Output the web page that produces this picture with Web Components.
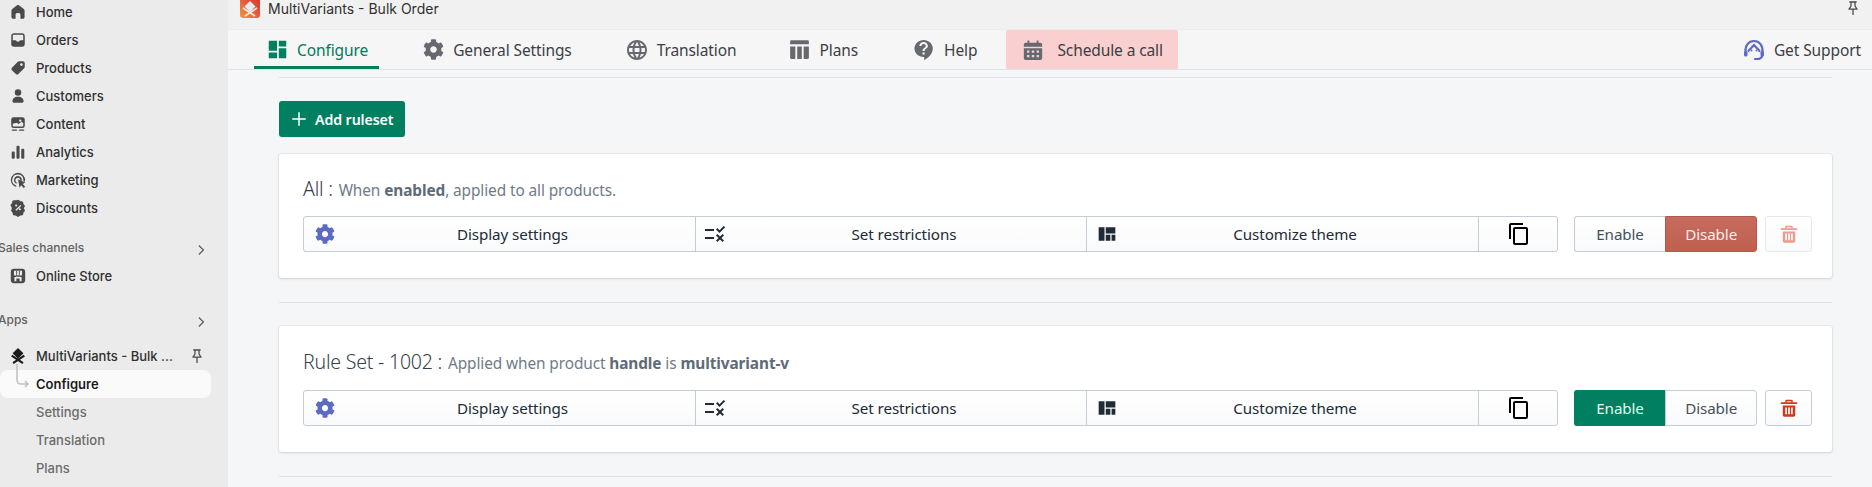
<!DOCTYPE html>
<html lang="en">
<head>
<meta charset="utf-8">
<title>MultiVariants - Bulk Order</title>
<style>
  html, body { margin: 0; height: 487px; overflow: hidden; background: #f4f6f8; }
  body { display: flex; font-family: "Noto Sans", sans-serif; }
  app-main { flex: 1; min-width: 0; }
</style>
</head>
<body>

<app-sidebar>
  <side-item icon="home">Home</side-item>
  <side-item icon="orders">Orders</side-item>
  <side-item icon="products">Products</side-item>
  <side-item icon="customers">Customers</side-item>
  <side-item icon="content">Content</side-item>
  <side-item icon="analytics">Analytics</side-item>
  <side-item icon="marketing">Marketing</side-item>
  <side-item icon="discounts">Discounts</side-item>
  <side-heading style="margin-top:12px">Sales channels</side-heading>
  <side-item icon="store">Online Store</side-item>
  <side-heading style="margin-top:16px">Apps</side-heading>
  <side-item icon="applogo" style="margin-top:8px" pinned>MultiVariants - Bulk ...</side-item>
  <side-item sub active connector>Configure</side-item>
  <side-item sub>Settings</side-item>
  <side-item sub>Translation</side-item>
  <side-item sub>Plans</side-item>
</app-sidebar>

<app-main>
  <title-bar>MultiVariants - Bulk Order</title-bar>
  <tab-bar>
    <tab-item icon="dashboard" active>Configure</tab-item>
    <tab-item icon="cog" style="margin-left:31px">General Settings</tab-item>
    <tab-item icon="globe" style="margin-left:31px">Translation</tab-item>
    <tab-item icon="table" style="margin-left:29px">Plans</tab-item>
    <tab-item icon="help" style="margin-left:32px">Help</tab-item>
    <tab-item icon="calendar" highlight style="margin-left:18px">Schedule a call</tab-item>
    <tab-item icon="support" slot="end">Get Support</tab-item>
  </tab-bar>
  <rule-list>
    <add-button>Add ruleset</add-button>
    <rule-card heading="All :" state="disabled">When <b>enabled</b>, applied to all products.</rule-card>
    <rule-card heading="Rule Set - 1002 :" state="enabled" style="--card-h:126px;--head-top:25px;--head-h:39px">Applied when product <b>handle</b> is <b>multivariant-v</b></rule-card>
  </rule-list>
</app-main>

<script>
const ICONS = {
  home: '<path d="M10 2.200c-.5 0-1 .2-1.400.5L3.600 6.600C3 7 2.700 7.700 2.700 8.400v7.100c0 1.100.9 2 2 2h2.600v-4.700c0-1 .8-1.800 1.800-1.800h1.800c1 0 1.800.8 1.800 1.800v4.700h2.600c1.100 0 2-.9 2-2V8.400c0-.7-.3-1.400-.9-1.800l-5-3.900c-.4-.3-.9-.5-1.400-.5z"/>',
  orders: '<path fill-rule="evenodd" d="M5.500 2.500h9a3 3 0 0 1 3 3v9a3 3 0 0 1-3 3h-9a3 3 0 0 1-3-3v-9a3 3 0 0 1 3-3zM4.200 5.500v4.700h3c.5 0 .8.300 1 .7.300.7 1 1.100 1.800 1.100s1.500-.4 1.800-1.100c.2-.4.500-.7 1-.7h3V5.500c0-.8-.6-1.400-1.300-1.400h-9c-.7 0-1.300.6-1.300 1.400z"/>',
  products: '<path fill-rule="evenodd" d="M11.500 2.500h4a2 2 0 0 1 2 2v4c0 .8-.3 1.500-.9 2l-6.200 6.200c-.8.800-2 .8-2.800 0l-4.300-4.300c-.8-.8-.8-2 0-2.800L9.500 3.400c.5-.6 1.200-.9 2-.9zM13.800 7.700a1.500 1.500 0 1 0 0-3 1.500 1.500 0 0 0 0 3z"/>',
  customers: '<circle cx="10" cy="6" r="3.600"/><path d="M10 10.800c-3.900 0-6.200 2.200-6.200 5 0 1 .8 1.700 1.700 1.700h9c.9 0 1.700-.7 1.700-1.700 0-2.800-2.300-5-6.200-5z"/>',
  content: '<path fill-rule="evenodd" d="M5 2.500h10a2.500 2.500 0 0 1 2.500 2.500v7a2.500 2.500 0 0 1-2.500 2.500H5A2.500 2.500 0 0 1 2.500 12V5A2.500 2.500 0 0 1 5 2.500zM4.200 9.800v2.200c0 .5.400.9.800.9h10c.4 0 .8-.4.800-.9V9l-2-1.500-3 2.600-2.500-1.600zM12.500 7.500a1.300 1.300 0 1 0 0-2.600 1.300 1.300 0 0 0 0 2.600z"/><rect x="3" y="16" width="6" height="1.500" rx=".7"/><rect x="11" y="16" width="6" height="1.500" rx=".7"/>',
  analytics: '<rect x="3" y="9.500" width="3.400" height="8" rx="1.300"/><rect x="8.300" y="3" width="3.400" height="14.500" rx="1.300"/><rect x="13.600" y="6.500" width="3.400" height="11" rx="1.300"/>',
  marketing: '<path d="M10 2a8 8 0 0 0-1.700 15.800l-.5-1.800a6.200 6.200 0 1 1 8.200-6c0 .5 0 1-.2 1.500l1.800.5A8 8 0 0 0 10 2z"/><path d="M10 5.500a4.500 4.500 0 0 0-1.200 8.800l-.5-1.800a2.700 2.700 0 1 1 4.200-2.500c0 .3 0 .5-.1.700l1.800.5A4.500 4.500 0 0 0 10 5.500z"/><path d="M10 9.500l1.800 9 1.800-2.600 2.700 3 1.700-1.500-2.800-3 3-1.500z"/>',
  discounts: '<path fill-rule="evenodd" d="M8.600 1.700a2 2 0 0 1 2.800 0l1 1 1.400-.1a2 2 0 0 1 2.100 2l.1 1.400 1 1a2 2 0 0 1 0 2.800l-.6 1.200.6 1.200a2 2 0 0 1 0 2.800l-1 1-.1 1.400a2 2 0 0 1-2.100 2l-1.400-.1-1 1a2 2 0 0 1-2.800 0l-1-1-1.400.1a2 2 0 0 1-2.100-2l-.1-1.400-1-1a2 2 0 0 1 0-2.800L3 10l-.6-1.200a2 2 0 0 1 0-2.800l1-1 .1-1.400a2 2 0 0 1 2.100-2l1.400.1zM8 9a1.200 1.200 0 1 0 0-2.400A1.200 1.200 0 0 0 8 9zm4 4.400A1.200 1.200 0 1 0 12 11a1.200 1.200 0 0 0 0 2.400zm.8-6.300-5.700 5.700 1 1 5.700-5.700z" transform="translate(0 -.1) scale(1 .95)"/>',
  store: '<path fill-rule="evenodd" d="M5.500 2h9A3.500 3.500 0 0 1 18 5.500v9a3.500 3.500 0 0 1-3.500 3.500h-9A3.500 3.500 0 0 1 2 14.500v-9A3.500 3.500 0 0 1 5.500 2zM5.500 4.200v4.600c.5.800 2 .8 3 0 .8.700 2.200.7 3 0 1 .8 2.500.8 3 0V4.200zM6 11v4.700h2.200v-3h3.600v3H14V11c-1 .2-1.800 0-2.500-.5-.8.500-2.200.5-3 0-.7.500-1.500.7-2.500.5z"/><path d="M8 4.500h1v4H8zM11 4.500h1v4h-1z"/>',
  applogo: '<path d="M3 9.500 15.500 18M17 9.500 4.500 18" fill="none" stroke="currentColor" stroke-width="2.300"/><path d="M10 1 16 7 10 13 4 7z"/>',
  dashboard: '<path d="M2 2h9.500v11.500H2zM2 15.500h9.500V22H2zM13.500 2H22v6.500h-8.500zM13.500 10.500H22V22h-8.500z"/>',
  cog: '<g transform="scale(.0469)"><path d="M487.400 315.700l-42.600-24.600c4.300-23.200 4.300-47 0-70.200l42.600-24.600c4.900-2.800 7.100-8.600 5.500-14-11.100-35.600-30-67.800-54.700-94.600-3.800-4.100-10-5.100-14.800-2.300L380.800 110c-17.900-15.400-38.500-27.300-60.800-35.100V25.800c0-5.600-3.900-10.500-9.400-11.700-36.700-8.200-74.300-7.800-109.200 0-5.500 1.200-9.400 6.100-9.400 11.700V75c-22.200 7.900-42.800 19.800-60.800 35.100L88.700 85.500c-4.900-2.800-11-1.900-14.800 2.300-24.700 26.700-43.600 58.900-54.700 94.600-1.700 5.400.6 11.200 5.500 14L67.300 221c-4.300 23.200-4.300 47 0 70.200l-42.600 24.600c-4.900 2.800-7.100 8.600-5.500 14 11.100 35.600 30 67.800 54.700 94.600 3.800 4.100 10 5.100 14.800 2.300l42.600-24.600c17.900 15.400 38.500 27.300 60.800 35.100v49.200c0 5.600 3.900 10.500 9.400 11.700 36.700 8.200 74.300 7.800 109.200 0 5.500-1.200 9.400-6.100 9.400-11.700v-49.200c22.200-7.900 42.800-19.800 60.800-35.100l42.600 24.600c4.900 2.800 11 1.900 14.800-2.300 24.700-26.700 43.600-58.900 54.700-94.600 1.500-5.500-.7-11.300-5.600-14.100zM256 336c-44.100 0-80-35.900-80-80s35.900-80 80-80 80 35.900 80 80-35.900 80-80 80z"/></g>',
  globe: '<path d="M11.990 2C6.470 2 2 6.480 2 12s4.470 10 9.990 10C17.520 22 22 17.520 22 12S17.520 2 11.990 2zm6.930 6h-2.950c-.32-1.250-.78-2.450-1.380-3.560 1.840.63 3.370 1.910 4.330 3.560zM12 4.040c.83 1.200 1.480 2.530 1.910 3.960h-3.820c.43-1.430 1.080-2.760 1.910-3.960zM4.260 14C4.100 13.360 4 12.690 4 12s.1-1.360.26-2h3.380c-.08.660-.14 1.320-.14 2s.06 1.340.14 2H4.260zm.82 2h2.950c.32 1.250.78 2.450 1.380 3.560-1.840-.63-3.370-1.900-4.330-3.560zm2.950-8H5.080c.96-1.660 2.490-2.930 4.330-3.560C8.810 5.550 8.350 6.750 8.030 8zM12 19.960c-.83-1.200-1.480-2.530-1.910-3.960h3.820c-.43 1.430-1.080 2.760-1.910 3.960zM14.340 14H9.660c-.09-.66-.16-1.320-.16-2s.07-1.350.16-2h4.680c.09.650.16 1.320.16 2s-.07 1.340-.16 2zm.25 5.560c.6-1.110 1.060-2.310 1.380-3.560h2.950c-.96 1.650-2.490 2.930-4.330 3.560zM16.360 14c.08-.66.14-1.320.14-2s-.06-1.340-.14-2h3.380c.16.640.26 1.310.26 2s-.1 1.360-.26 2h-3.380z"/>',
  table: '<path d="M3 4a1 1 0 0 1 1-1h16a1 1 0 0 1 1 1v3H3zM3 9h5v12H4a1 1 0 0 1-1-1zM9.800 9h4.400v12H9.800zM16 9h5v11a1 1 0 0 1-1 1h-4z"/>',
  help: '<path d="M11.500 2C6.810 2 3 5.810 3 10.500S6.810 19 11.500 19h.5v3c4.860-2.340 8-7 8-11.500C20 5.810 16.190 2 11.500 2zm1 14.500h-2v-2h2v2zm0-3.500h-2c0-3.250 3-3 3-5 0-1.100-.9-2-2-2s-2 .9-2 2h-2c0-2.210 1.790-4 4-4s4 1.790 4 4c0 2.500-3 2.750-3 5z" transform="translate(-.8 0) scale(1.080 1)"/>',
  calendar: '<path fill-rule="evenodd" d="M6 1.500h2V4h8V1.500h2V4h2a2 2 0 0 1 2 2v2.500H2V6a2 2 0 0 1 2-2h2zM2 10h20v11a2 2 0 0 1-2 2H4a2 2 0 0 1-2-2zm3.500 2.500v2.500H8v-2.500zm5.200 0v2.500h2.600v-2.500zm5.300 0v2.500h2.500v-2.500zm-10.500 5V20H8v-2.500zm5.200 0V20h2.600v-2.500zm5.300 0V20h2.500v-2.500z"/>',
  support: '<g fill="none" stroke="#5c6ac4" stroke-width="2.200" stroke-linecap="round"><path d="M3.500 14C3 7.500 6.500 3 12 3s9 4.500 8.500 11"/><path d="M6.500 13c.7-1.500 2-2 3-3.300L12 7l2.500 2.700c1 1.300 2.300 1.800 3 3.300"/><path d="M20 18.500c-.8 1.700-2.300 2.500-4.500 2.500H13"/></g><rect x="2" y="13" width="3.500" height="5.500" rx="1.500" fill="#5c6ac4"/><rect x="18.500" y="13" width="3.500" height="5.500" rx="1.500" fill="#5c6ac4"/><circle cx="9.500" cy="12.500" r="1" fill="#5c6ac4"/><circle cx="14.500" cy="12.500" r="1" fill="#5c6ac4"/>',
  rule: '<path d="M16.540 11 13 7.460l1.410-1.410 2.120 2.120 4.240-4.240 1.410 1.410L16.540 11zM11 7H2v2h9V7zm10 6.410L19.590 12 17 14.590 14.410 12 13 13.410 15.590 16 13 18.590 14.410 20 17 17.410 19.590 20 21 18.590 18.410 16 21 13.410zM11 15H2v2h9v-2z"/>',
  quilt: '<path d="M2 4h7v16H2zM10.500 4H22v7.500H10.500zM10.500 13H16v7h-5.500zM17.500 13H22v7h-4.500z"/>',
  copy: '<path d="M16 1H4c-1.100 0-2 .9-2 2v14h2V3h12V1zm3 4H8c-1.100 0-2 .9-2 2v14c0 1.100.9 2 2 2h11c1.100 0 2-.9 2-2V7c0-1.100-.9-2-2-2zm0 16H8V7h11v14z"/>',
  trash: '<path fill-rule="evenodd" d="M9 2h6a1.500 1.500 0 0 1 1.500 1.500V5H21a1 1 0 0 1 0 2.200H3A1 1 0 0 1 3 5h4.500V3.500A1.500 1.500 0 0 1 9 2zm.300 1.800V5h5.400V3.800zM4.500 9h15v11.500a2 2 0 0 1-2 2h-11a2 2 0 0 1-2-2zm3 2.500v8h2v-8zm3.500 0v8h2v-8zm3.500 0v8h2v-8z"/>',
  plus: '<path d="M11 3h2v8h8v2h-8v8h-2v-8H3v-2h8z"/>',
  chevron: '<path d="M7 3.500 13.500 10 7 16.500" fill="none" stroke="#5c5c5c" stroke-width="1.800"/>',
  pin: '<path d="M6 2.500h8M7.500 2.500v5L5 11.500h10l-2.500-4v-5M10 11.500v6.500" fill="none" stroke="currentColor" stroke-width="1.600" stroke-linecap="round" stroke-linejoin="round"/>'
};

// drawn size per icon in the tab bar, the paths do not all fill their box
const TAB_ICON_SIZE = { dashboard: 21, cog: 21, globe: 24, table: 25, help: 24, calendar: 22, support: 24 };

function iconSvg(name, size, box) {
  return `<svg width="${size}" height="${size}" viewBox="0 0 ${box} ${box}" fill="currentColor" aria-hidden="true">${ICONS[name]}</svg>`;
}

class AppSidebar extends HTMLElement {
  connectedCallback() {
    this.attachShadow({ mode: 'open' });
    this.shadowRoot.innerHTML = `
      <style>
        :host { display: block; width: 228px; height: 487px; flex: none; background: #ebebeb; overflow: hidden; }
        .list { display: flex; flex-direction: column; margin-top: -2px; }
      </style>
      <div class="list"><slot></slot></div>`;
  }
}
customElements.define('app-sidebar', AppSidebar);

class SideItem extends HTMLElement {
  connectedCallback() {
    const icon = this.getAttribute('icon');
    const sub = this.hasAttribute('sub');
    const active = this.hasAttribute('active');
    this.attachShadow({ mode: 'open' });
    this.shadowRoot.innerHTML = `
      <style>
        :host { display: block; position: relative; }
        .row {
          display: flex; align-items: center; height: 28px; width: 211px; box-sizing: border-box;
          padding-left: 9px; border-radius: 8px;
          font: 500 13px/28px Inter, sans-serif;
          color: ${sub ? '#6b6b6b' : '#303030'};
        }
        .row.active { background: #fafafa; color: #1a1a1a; font-weight: 600; }
        .ico { width: 18px; height: 18px; margin-right: 9px; display: flex; color: #4a4a4a; }
        .ico.applogo { color: #1a1a1a; }
        .ico.none { visibility: hidden; }
        .pin { margin-left: auto; margin-right: 6px; display: flex; color: #4a4a4a; }
        .link { position: absolute; left: 16px; top: -6px; }
      </style>
      <div class="row ${active ? 'active' : ''}">
        <span class="ico ${icon || 'none'}">${icon ? iconSvg(icon, 18, 20) : ''}</span>
        <slot></slot>
        ${this.hasAttribute('pinned') ? `<span class="pin">${iconSvg('pin', 16, 20)}</span>` : ''}
      </div>
      ${this.hasAttribute('connector') ? `<svg class="link" width="14" height="26" fill="none" stroke="#c2c2c2" stroke-width="1.600"><path d="M1 0v15c0 3 1.500 5 4 5h7M9 17l3 3-3 3"/></svg>` : ''}`;
  }
}
customElements.define('side-item', SideItem);

class SideHeading extends HTMLElement {
  connectedCallback() {
    this.attachShadow({ mode: 'open' });
    this.shadowRoot.innerHTML = `
      <style>
        :host { display: flex; align-items: center; justify-content: space-between; height: 28px; margin-left: -2px; padding-right: 20px; font: 500 12px/28px Inter, sans-serif; color: #616161; }
        svg { margin-top: 3px; }
      </style>
      <slot></slot>${iconSvg('chevron', 14, 20)}`;
  }
}
customElements.define('side-heading', SideHeading);

class AppMain extends HTMLElement {
  connectedCallback() {
    this.attachShadow({ mode: 'open' });
    this.shadowRoot.innerHTML = `
      <style>:host { display: block; height: 487px; overflow: hidden; }</style>
      <slot></slot>`;
  }
}
customElements.define('app-main', AppMain);

class TitleBar extends HTMLElement {
  connectedCallback() {
    this.attachShadow({ mode: 'open' });
    this.shadowRoot.innerHTML = `
      <style>
        :host { display: flex; align-items: flex-start; height: 29px; padding-left: 12px; padding-right: 11px; background: #f1f1f1; border-bottom: 1px solid #ebebeb; font: 400 14px/17px Inter, sans-serif; color: #303030; }
        .logo { width: 20px; height: 20px; margin-top: -2px; margin-right: 8px; flex: none; }
        .pin { margin-left: auto; color: #4a4a4a; display: flex; }
      </style>
      <svg class="logo" viewBox="0 0 20 20">
        <defs><linearGradient id="lg" x1="0" y1="1" x2="1" y2="0"><stop offset="0" stop-color="#f39a3c"/><stop offset=".6" stop-color="#e4533a"/><stop offset="1" stop-color="#d8352a"/></linearGradient></defs>
        <rect width="20" height="20" rx="3" fill="url(#lg)"/>
        <path d="M10 3l5.500 5.500L10 14 4.500 8.500z" fill="#e2edf5"/>
        <path d="M3 10l12 8M17 10 5 18" fill="none" stroke="#fbe6da" stroke-width="1.700"/>
      </svg>
      <slot></slot>
      <span class="pin">${iconSvg('pin', 16, 20)}</span>`;
  }
}
customElements.define('title-bar', TitleBar);

class TabBar extends HTMLElement {
  connectedCallback() {
    this.attachShadow({ mode: 'open' });
    this.shadowRoot.innerHTML = `
      <style>
        :host { display: flex; height: 39px; padding-left: 26px; background: #f6f6f7; border-bottom: 1px solid #dfe3e8; }
        .end { margin-left: auto; display: flex; }
      </style>
      <slot></slot><div class="end"><slot name="end"></slot></div>`;
  }
}
customElements.define('tab-bar', TabBar);

class TabItem extends HTMLElement {
  connectedCallback() {
    const active = this.hasAttribute('active');
    const highlight = this.hasAttribute('highlight');
    const icon = this.getAttribute('icon');
    this.attachShadow({ mode: 'open' });
    this.shadowRoot.innerHTML = `
      <style>
        :host { display: flex; align-items: center; gap: ${highlight ? 14 : 10}px; height: 39px; box-sizing: border-box; padding: 0 ${highlight ? 15 : 11}px 0 ${highlight ? 17 : 13}px; font: 400 15.500px "Noto Sans", sans-serif; letter-spacing: -.1px; color: ${active ? '#007a5c' : '#3b3f45'}; white-space: nowrap; ${active ? 'border-bottom: 3px solid #008060; padding-top: 3px;' : ''} ${highlight ? 'background: #f9cfcf; border-radius: 2px;' : ''} }
        .ico { width: 20px; height: 24px; display: flex; align-items: center; justify-content: center; flex: none; color: ${active ? '#008060' : '#666a70'}; }
        svg { flex: none; }
      </style>
      <span class="ico">${iconSvg(icon, TAB_ICON_SIZE[icon], 24)}</span><slot></slot>`;
  }
}
customElements.define('tab-item', TabItem);

class RuleList extends HTMLElement {
  connectedCallback() {
    this.attachShadow({ mode: 'open' });
    this.shadowRoot.innerHTML = `
      <style>
        :host { display: flex; flex-direction: column; align-items: stretch; margin: 7px 40px 0 51px; padding-top: 23px; border-top: 1px solid #dfe3e8; }
      </style>
      <slot></slot>`;
  }
}
customElements.define('rule-list', RuleList);

class AddButton extends HTMLElement {
  connectedCallback() {
    this.attachShadow({ mode: 'open' });
    this.shadowRoot.innerHTML = `
      <style>
        :host { display: flex; align-items: center; align-self: flex-start; gap: 7px; height: 36px; box-sizing: border-box; padding: 0 12px 0 11px; margin-bottom: 17px; background: #008060; border-radius: 3px; box-shadow: 0 1px 0 rgba(22,29,37,.05); font: 600 14.200px "Noto Sans", sans-serif; letter-spacing: -.1px; color: #fff; }
      </style>
      ${iconSvg('plus', 18, 24)}<slot></slot>`;
  }
}
customElements.define('add-button', AddButton);

class RuleCard extends HTMLElement {
  connectedCallback() {
    const on = this.getAttribute('state') === 'enabled';
    const seg = (icon, size, pad, label) => `
      <div class="seg" style="padding-left:${pad}px"><span class="seg-ico ${icon}">${iconSvg(icon, size, 24)}</span><span class="seg-label">${label}</span></div>`;
    this.attachShadow({ mode: 'open' });
    this.shadowRoot.innerHTML = `
      <style>
        :host { display: block; margin-bottom: 23px; padding-bottom: 24px; border-bottom: 1px solid #dfe3e8; }
        .card { box-sizing: border-box; height: var(--card-h, 124px); padding: var(--head-top, 24px) 20px 0 24px; background: #fff; border-radius: 3px; box-shadow: 0 0 0 1px rgba(63,63,68,.05), 0 1px 3px 0 rgba(63,63,68,.15); }
        h2 { margin: 0; height: var(--head-h, 38px); font: 300 19.500px/22px "Noto Sans", sans-serif; letter-spacing: -.2px; color: #37404a; white-space: nowrap; }
        .desc { font-size: 15.400px; font-weight: 400; letter-spacing: -.1px; color: #6f7b88; margin-left: 1px; }
        ::slotted(b) { font-weight: 700; color: #5f6b78; }
        .row { display: flex; align-items: stretch; height: 36px; }
        .bar { display: grid; grid-template-columns: 391px 391px 392px 80px; width: 1255px; border: 1px solid #c4cdd5; border-radius: 3px; box-sizing: border-box; background: linear-gradient(#fff, #f9fafb); }
        .seg { display: flex; align-items: center; border-left: 1px solid #c4cdd5; font: 400 15.200px "Noto Sans", sans-serif; letter-spacing: -.1px; color: #212b36; }
        .seg:first-child { border-left: 0; }
        .seg-ico { display: flex; }
        .seg-ico.cog { color: #5c6ac4; }
        .seg-label { flex: 1; text-align: center; padding-right: 5px; }
        .copy { justify-content: center; padding: 0; color: #000; }
        .toggle { display: flex; width: 184px; margin-left: 16px; }
        .toggle span { flex: 1; display: flex; align-items: center; justify-content: center; box-sizing: border-box; border: 1px solid #c4cdd5; font: 400 15.200px "Noto Sans", sans-serif; letter-spacing: -.1px; color: #454f5b; background: linear-gradient(#fff, #f9fafb); }
        .toggle span:first-child { border-radius: 3px 0 0 3px; border-right: 0; }
        .toggle span:last-child { border-radius: 0 3px 3px 0; }
        .toggle .green { background: #008060; border-color: #008060; color: #e9f5f1; }
        .toggle .red { background: linear-gradient(#c66b5f, #c0604f); border-color: #b0584b; color: #fbeeeb; }
        .del { display: flex; align-items: center; justify-content: center; box-sizing: border-box; width: 47px; margin-left: 8px; border: 1px solid ${on ? '#c4cdd5' : '#e6e9ec'}; border-radius: 3px; color: ${on ? '#cf3a1f' : '#eb9c8e'}; background: linear-gradient(#fff, #f9fafb); }
      </style>
      <div class="card">
        <h2>${this.getAttribute('heading')} <span class="desc"><slot></slot></span></h2>
        <div class="row">
          <div class="bar">
            ${seg('cog', 20, 11, 'Display settings')}
            ${seg('rule', 24, 7, 'Set restrictions')}
            ${seg('quilt', 20, 10, 'Customize theme')}
            <div class="seg copy">${iconSvg('copy', 24, 24)}</div>
          </div>
          <div class="toggle"><span class="${on ? 'green' : ''}">Enable</span><span class="${on ? '' : 'red'}">Disable</span></div>
          <div class="del">${iconSvg('trash', 20, 24)}</div>
        </div>
      </div>`;
  }
}
customElements.define('rule-card', RuleCard);
</script>
</body>
</html>
